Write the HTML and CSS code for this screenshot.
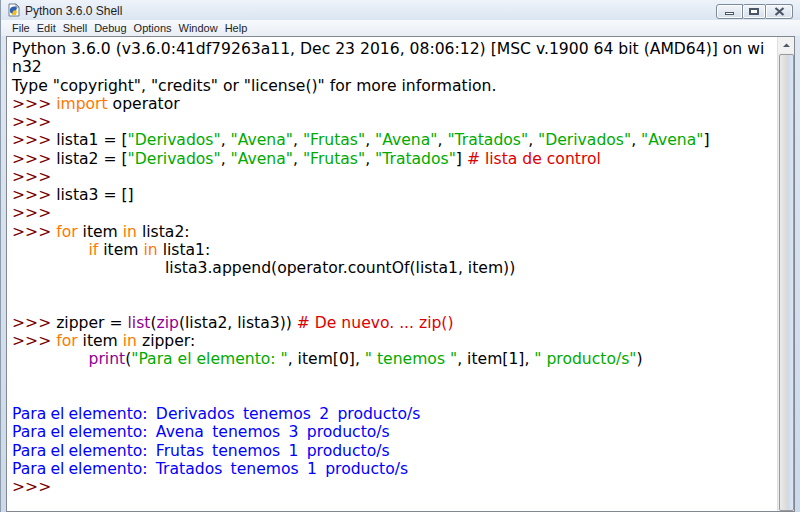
FILE: index.html
```html
<!DOCTYPE html>
<html>
<head>
<meta charset="utf-8">
<link rel="stylesheet" href="styles.css">
</head>
<body>
<div class="window">
  <div class="titlebar">
    <div class="title-left">
      <svg class="app-icon" width="14" height="14" viewBox="0 0 14 14">
        <path d="M2 1h7l3 3v9H2z" fill="#fff" stroke="#6b7a8c" stroke-width="1"/>
        <path d="M3 6c2-3 5-3 7-1l-2 5c-1 1-4 1-5-1z" fill="#2f5fb0"/>
        <path d="M6 8c1-1 3-1 4 0l-1 4H5z" fill="#f0c020"/>
        <path d="M9 1v3h3" fill="none" stroke="#6b7a8c"/>
      </svg>
      <span class="title-text">Python 3.6.0 Shell</span>
    </div>
    <div class="win-buttons">
      <div class="wbtn wmin"><span class="glyph-min"></span></div>
      <div class="wbtn wmax"><span class="glyph-max"></span></div>
      <div class="wbtn wclose"><svg width="11" height="9" viewBox="0 0 11 9"><path d="M1.5 1l8 7M9.5 1l-8 7" stroke="#4a5566" stroke-width="2.2" fill="none"/></svg></div>
    </div>
  </div>
  <div class="menubar">
    <span class="menu">File</span>
    <span class="menu">Edit</span>
    <span class="menu">Shell</span>
    <span class="menu">Debug</span>
    <span class="menu">Options</span>
    <span class="menu">Window</span>
    <span class="menu">Help</span>
  </div>
  <div class="client">
    <div class="text">
<div class="ln">Python 3.6.0 (v3.6.0:41df79263a11, Dec 23 2016, 08:06:12) [MSC v.1900 64 bit (AMD64)] on wi</div>
<div class="ln">n32</div>
<div class="ln">Type "copyright", "credits" or "license()" for more information.</div>
<div class="ln"><span class="p">&gt;&gt;&gt; </span><span class="k">import</span> operator</div>
<div class="ln"><span class="p">&gt;&gt;&gt; </span></div>
<div class="ln"><span class="p">&gt;&gt;&gt; </span>lista1 = [<span class="s">"Derivados"</span>, <span class="s">"Avena"</span>, <span class="s">"Frutas"</span>, <span class="s">"Avena"</span>, <span class="s">"Tratados"</span>, <span class="s">"Derivados"</span>, <span class="s">"Avena"</span>]</div>
<div class="ln"><span class="p">&gt;&gt;&gt; </span>lista2 = [<span class="s">"Derivados"</span>, <span class="s">"Avena"</span>, <span class="s">"Frutas"</span>, <span class="s">"Tratados"</span>] <span class="c"># lista de control</span></div>
<div class="ln"><span class="p">&gt;&gt;&gt; </span></div>
<div class="ln"><span class="p">&gt;&gt;&gt; </span>lista3 = []</div>
<div class="ln"><span class="p">&gt;&gt;&gt; </span></div>
<div class="ln"><span class="p">&gt;&gt;&gt; </span><span class="k">for</span> item <span class="k">in</span> lista2:</div>
<div class="ln">	<span class="k">if</span> item <span class="k">in</span> lista1:</div>
<div class="ln">		lista3.append(operator.countOf(lista1, item))</div>
<div class="ln"> </div>
<div class="ln"> </div>
<div class="ln"><span class="p">&gt;&gt;&gt; </span>zipper = <span class="b">list</span>(<span class="b">zip</span>(lista2, lista3)) <span class="c"># De nuevo. ... zip()</span></div>
<div class="ln"><span class="p">&gt;&gt;&gt; </span><span class="k">for</span> item <span class="k">in</span> zipper:</div>
<div class="ln">	<span class="b">print</span>(<span class="s">"Para el elemento: "</span>, item[0], <span class="s">" tenemos "</span>, item[1], <span class="s">" producto/s"</span>)</div>
<div class="ln"> </div>
<div class="ln"> </div>
<div class="ln o">Para el elemento:  Derivados  tenemos  2  producto/s</div>
<div class="ln o">Para el elemento:  Avena  tenemos  3  producto/s</div>
<div class="ln o">Para el elemento:  Frutas  tenemos  1  producto/s</div>
<div class="ln o">Para el elemento:  Tratados  tenemos  1  producto/s</div>
<div class="ln"><span class="p">&gt;&gt;&gt; </span></div>
    </div>
    <div class="scrollbar">
      <div class="sb-up"><svg width="7" height="4" viewBox="0 0 7 4"><path d="M0 4L3.5 0.5L7 4z" fill="#4d5766"/></svg></div>
      <div class="sb-thumb"></div>
    </div>
  </div>
</div>
</body>
</html>
```
FILE: styles.css
```css
html, body {
  margin: 0;
  padding: 0;
  width: 800px;
  height: 512px;
  overflow: hidden;
}
body {
  background: #cfdcec;
  font-family: "DejaVu Sans", "Noto Sans", sans-serif;
}
.window {
  width: 800px;
  height: 512px;
  display: flex;
  flex-direction: column;
  background: linear-gradient(#dfe8f3, #cbd9ea);
  box-sizing: border-box;
  border-left: 1px solid #8d9bab;
}
.titlebar {
  height: 20px;
  display: flex;
  align-items: center;
  justify-content: space-between;
  background: linear-gradient(#eef3f9, #dbe5f1);
}
.title-left {
  display: flex;
  align-items: center;
  padding-left: 6px;
  gap: 4px;
}
.app-icon { display: block; }
.title-text {
  font-family: "Liberation Sans", "DejaVu Sans", sans-serif;
  font-size: 12px;
  color: #1e1e1e;
  padding-top: 2px;
}
.win-buttons {
  display: flex;
  gap: 0;
  padding-right: 7px;
  padding-top: 4px;
  align-self: flex-start;
}
.wbtn {
  height: 13px;
  border: 1px solid #7d8a9c;
  background: linear-gradient(#f2f5f9, #d8e0ea);
  display: flex;
  align-items: center;
  justify-content: center;
  border-radius: 2px;
  box-shadow: inset 0 0 0 1px #fafcfe;
}
.wmin { width: 25px; border-radius: 3px 0 0 3px; }
.wmax { width: 22px; border-left: none; }
.wclose { width: 26px; border-left: none; border-radius: 0 3px 3px 0; }
.glyph-min {
  width: 9px;
  height: 3px;
  border: 1px solid #4a5566;
  background: #fff;
  margin-top: 4px;
  box-sizing: border-box;
}
.glyph-max {
  width: 10px;
  height: 7px;
  border: 2px solid #4a5566;
  border-top-width: 2px;
  box-sizing: border-box;
  background: #fff;
}
.menubar {
  height: 16px;
  display: flex;
  align-items: center;
  gap: 7px;
  padding-left: 11px;
  background: linear-gradient(#f7f9fc, #e9eef5);
  font-family: "Liberation Sans", sans-serif;
  font-size: 11px;
  color: #1e1e1e;
}
.client {
  flex: 1;
  display: flex;
  margin-left: 5px;
  margin-right: 5px;
  border: 1px solid #828790;
  background: #ffffff;
  min-height: 0;
}
.text {
  flex: 1;
  padding: 3px 0 0 5px;
  font-family: "DejaVu Sans", sans-serif;
  font-size: 15.6px;
  line-height: 18.25px;
  color: #000;
  overflow: hidden;
}
.ln {
  white-space: pre;
  tab-size: 76.5px;
  height: 18.25px;
}
.p { color: #7a0000; }
.k { color: #ff7700; }
.s { color: #00aa00; }
.c { color: #dd0000; }
.b { color: #900090; }
.o { color: #0000ff; word-spacing: -0.8px; }
.scrollbar {
  width: 16px;
  display: flex;
  flex-direction: column;
  background: #ececec;
  border-left: 1px solid #e0e0e0;
}
.sb-up {
  height: 16px;
  display: flex;
  align-items: center;
  justify-content: center;
  background: #f2f2f2;
}
.sb-thumb {
  flex: 1;
  margin: 1px 0 0 1px;
  border: 1px solid #9a9a9a;
  border-radius: 2px;
  background: linear-gradient(90deg, #eaeaea, #d8d8d8 60%, #cfdff2 75%, #dbe7f6);
}
```
